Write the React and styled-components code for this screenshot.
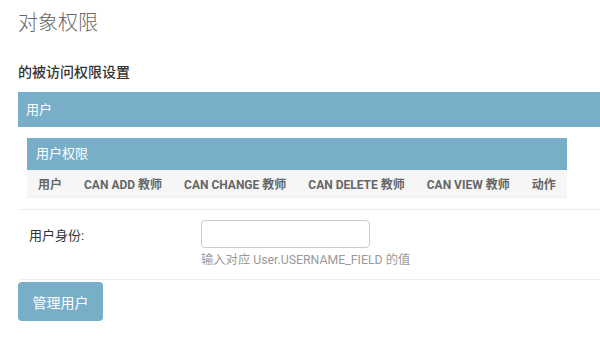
import React from 'react';
import styled, { createGlobalStyle } from 'styled-components';

const GlobalStyle = createGlobalStyle`
    html, body {
        margin: 0;
        padding: 0;
        background: #fff;
    }
    body {
        font-family: Roboto, "Noto Sans CJK SC", "Liberation Sans", sans-serif;
        color: #333;
        font-size: 14px;
    }
`;

const Content = styled.div`
    padding: 10px 0 0 18px;
`;

const Title = styled.h1`
    margin: 0;
    font-size: 20px;
    line-height: 26px;
    font-weight: 300;
    color: #666;
`;

const Subtitle = styled.h2`
    margin: 24px 0 0;
    font-size: 14px;
    line-height: 24px;
    font-weight: 500;
    color: #333;
`;

const Fieldset = styled.fieldset`
    margin: 8px 0 0;
    padding: 0;
    border: none;
    min-width: 0;
`;

const ModuleHeader = styled.div`
    background: #79aec8;
    color: #fff;
    font-size: 13px;
    height: 35px;
    line-height: 35px;
    padding-left: 8px;
`;

const InlineGroup = styled.div`
    padding: 11px 0 11px 9px;
    border-bottom: 1px solid #eee;
`;

const Table = styled.table`
    border-collapse: collapse;
`;

const Caption = styled.caption`
    background: #79aec8;
    color: #fff;
    font-size: 13px;
    text-align: left;
    height: 32px;
    line-height: 32px;
    padding-left: 9px;
`;

const Th = styled.th`
    background: #f6f6f6;
    color: #666;
    font-size: 12px;
    font-weight: 700;
    text-align: left;
    white-space: nowrap;
    padding: 0 11px;
    height: 27px;
    border-bottom: 1px solid #eee;
`;

const FormRow = styled.div`
    display: flex;
    padding: 10px 0 11px 11px;
    border-bottom: 1px solid #eee;
`;

const Label = styled.label`
    width: 172px;
    font-size: 13px;
    color: #333;
    line-height: 30px;
    padding-top: 1px;
`;

const Field = styled.div`
    display: flex;
    flex-direction: column;
`;

const Input = styled.input`
    box-sizing: border-box;
    width: 169px;
    height: 28px;
    border: 1px solid #ccc;
    border-radius: 4px;
    padding: 4px 6px;
    margin: 0;
    font: inherit;
`;

const Help = styled.div`
    font-size: 12.3px;
    color: #999;
    margin-top: 4px;
    line-height: 16px;
`;

const Button = styled.button`
    margin-top: 2px;
    width: 85px;
    height: 39px;
    border: none;
    border-radius: 4px;
    background: #79aec8;
    color: #fff;
    font-family: inherit;
    font-size: 14px;
    cursor: pointer;
`;

const columns = ['用户', 'CAN ADD 教师', 'CAN CHANGE 教师', 'CAN DELETE 教师', 'CAN VIEW 教师', '动作'];

export default function App() {
    return (
        <>
            <GlobalStyle />
            <Content>
                <Title>对象权限</Title>
                <Subtitle>的被访问权限设置</Subtitle>
                <Fieldset>
                    <ModuleHeader>用户</ModuleHeader>
                    <InlineGroup>
                        <Table>
                            <Caption>用户权限</Caption>
                            <thead>
                                <tr>
                                    {columns.map((c) => (
                                        <Th key={c}>{c}</Th>
                                    ))}
                                </tr>
                            </thead>
                        </Table>
                    </InlineGroup>
                    <FormRow>
                        <Label>用户身份:</Label>
                        <Field>
                            <Input type="text" />
                            <Help>输入对应 User.USERNAME_FIELD 的值</Help>
                        </Field>
                    </FormRow>
                </Fieldset>
                <Button>管理用户</Button>
            </Content>
        </>
    );
}
